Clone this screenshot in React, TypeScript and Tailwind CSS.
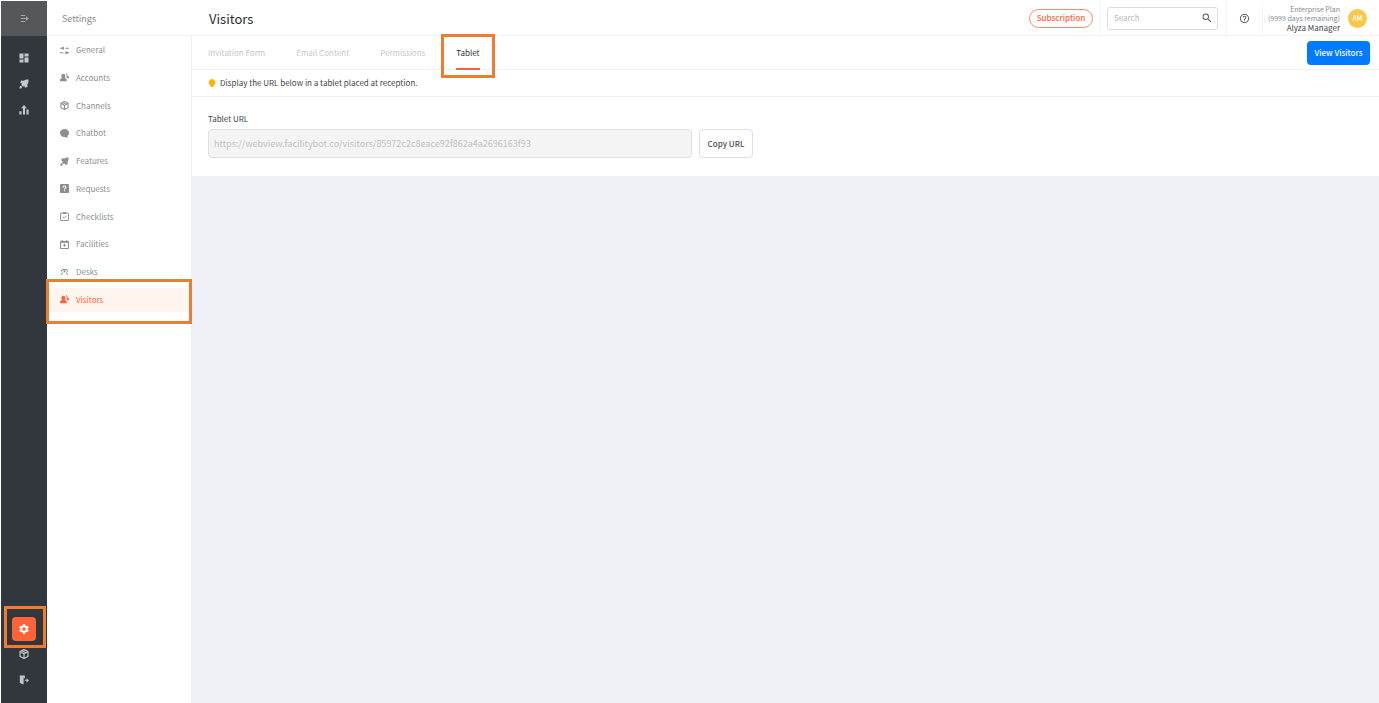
import type { ReactNode } from 'react'
import { useState } from 'react'
import clsx from 'clsx'
import { MdDashboard, MdHelpOutline, MdSearch, MdSettings } from 'react-icons/md'

interface IconProps {
  className?: string
}

function CollapseIcon({ className }: IconProps) {
  return (
    <svg viewBox="0 0 24 24" fill="none" stroke="currentColor" strokeWidth="2.8" className={className}>
      <path d="M2 4h12M2 12h15M2 20h12" />
      <path d="M16 6l7.500 6-7.500 6z" fill="currentColor" stroke="none" />
    </svg>
  )
}

function RocketIcon({ className }: IconProps) {
  return (
    <svg viewBox="0 0 24 24" fill="currentColor" className={className}>
      <path d="M23 1c-6 0-9 .8-11.500 3L5 3.500 3 9.500l4 1.500-1.500 3.500 4 4L13 17l1.500 4 6-2-.5-6.500C22.200 10 23 7 23 1z" />
      <path d="M5 16C2 16.500 1 19 1 23c4 0 6-1 6.500-4z" />
    </svg>
  )
}

function ReportIcon({ className }: IconProps) {
  return (
    <svg viewBox="0 0 24 24" fill="currentColor" className={className}>
      <path d="M1 15h5v8H1zM18 11h5v12h-5zM12 0l7 8h-4.500v15h-5V8H5z" />
    </svg>
  )
}

function BoxIcon({ className }: IconProps) {
  return (
    <svg viewBox="0 0 24 24" fill="none" stroke="currentColor" strokeWidth="2.800" strokeLinejoin="round" className={className}>
      <path d="M12 1.500l9.500 4.500v12L12 22.500 2.500 18V6z" />
      <path d="M2.500 6.500l9.500 5 9.500-5M12 11.500V22M7 4l10 5" />
    </svg>
  )
}

function LogoutIcon({ className }: IconProps) {
  return (
    <svg viewBox="0 0 24 24" fill="currentColor" className={className}>
      <path d="M2 1h12v7h-2.500V4H11v19l-9-4z" />
      <path d="M18 8l6 5-6 5v-4h-4v-2.500h4z" />
    </svg>
  )
}

function SlidersIcon({ className }: IconProps) {
  return (
    <svg viewBox="0 0 24 24" fill="none" stroke="currentColor" strokeWidth="2.800" className={className}>
      <path d="M0 6h10M14 6h10M0 18h9M15 18h9" />
      <path d="M8 2.500v7M17 14.500v7" strokeWidth="5" />
    </svg>
  )
}

function PeopleIcon({ className }: IconProps) {
  return (
    <svg viewBox="0 0 24 24" fill="currentColor" className={className}>
      <path d="M9 2c4 0 5.500 3 5.500 6 0 2.500-1 4-2 5.500 4 1 5.500 2.500 5.500 5V22H0v-3.500c0-2.500 2-4 6-5-1.500-1.500-2.500-3-2.500-5.500 0-3 1.500-6 5.500-6z" />
      <path d="M16 0c2 0 3.500.8 4 2.500L19.500 7c2.500.5 4.500 2 4.500 4.500V14h-5c-.5-1-1-1.500-1.500-2 .5-3 .5-7-1.500-12z" />
    </svg>
  )
}

function ChatIcon({ className }: IconProps) {
  return (
    <svg viewBox="0 0 24 24" fill="currentColor" className={className}>
      <path d="M12 0C5 0 0 4.500 0 10.500S5 21 11 21c3 0 5 .5 8.500 3 1-1.500 1-4 .5-6 2.500-1.500 4-4 4-7.500C24 4.500 19 0 12 0z" />
    </svg>
  )
}

function QuestionBoxIcon({ className }: IconProps) {
  return (
    <svg viewBox="0 0 24 24" className={className}>
      <rect x="0" y="0" width="24" height="24" rx="2" fill="currentColor" />
      <path d="M8.500 9c0-5 7-5 7-.5 0 3-3.500 3-3.500 6M12 16.500v3" fill="none" stroke="white" strokeWidth="3" />
    </svg>
  )
}

function ChecklistIcon({ className }: IconProps) {
  return (
    <svg viewBox="0 0 24 24" fill="none" stroke="currentColor" strokeWidth="2.600" className={className}>
      <rect x="1.500" y="3" width="21" height="19.500" rx="1" />
      <path d="M7 12.500l4 4 6.500-7" />
      <path d="M8 3h8" strokeWidth="5" />
    </svg>
  )
}

function FacilityIcon({ className }: IconProps) {
  return (
    <svg viewBox="0 0 24 24" fill="none" stroke="currentColor" strokeWidth="2.800" className={className}>
      <rect x="1.500" y="4" width="21" height="18.500" rx="1" />
      <path d="M2 5h20" strokeWidth="5" />
      <path d="M6 0v5M18 0v5M12 10v8M8 14h8" />
    </svg>
  )
}

function DeskIcon({ className }: IconProps) {
  return (
    <svg viewBox="0 0 24 24" fill="none" stroke="currentColor" strokeWidth="2.800" className={className}>
      <path d="M7 4h10l4 6M7 4l-4 5M3 18l4-6M21 18l-4-6" />
      <circle cx="12" cy="9" r="3" fill="currentColor" stroke="none" />
    </svg>
  )
}

function BulbIcon({ className }: IconProps) {
  return (
    <svg viewBox="0 0 24 24" fill="#ffb300" className={className}>
      <path d="M12 0a10 10 0 0 0-5 18.500V21c0 2 1.500 3 3 3h4c1.500 0 3-1 3-3v-2.500A10 10 0 0 0 12 0z" />
    </svg>
  )
}

const settingsItems = [
  { label: 'General', icon: SlidersIcon },
  { label: 'Accounts', icon: PeopleIcon },
  { label: 'Channels', icon: BoxIcon },
  { label: 'Chatbot', icon: ChatIcon },
  { label: 'Features', icon: RocketIcon },
  { label: 'Requests', icon: QuestionBoxIcon },
  { label: 'Checklists', icon: ChecklistIcon },
  { label: 'Facilities', icon: FacilityIcon },
  { label: 'Desks', icon: DeskIcon },
  { label: 'Visitors', icon: PeopleIcon },
]

const tabs = ['Invitation Form', 'Email Content', 'Permissions', 'Tablet']

const tabletUrl = 'https://webview.facilitybot.co/visitors/85972c2c8eace92f862a4a2696163f93'

// Orange frame drawn over the item it points at
function Highlight({ className }: IconProps) {
  return <span className={clsx('pointer-events-none absolute z-10 border-3 border-[#ed7d31]', className)} />
}

function RailButton({ label, children }: { label: string; children: ReactNode }) {
  return (
    <button aria-label={label} className="flex h-[26px] w-full items-center justify-center text-[#c5c7ca]">
      {children}
    </button>
  )
}

function Rail() {
  return (
    <aside className="flex w-[46px] shrink-0 flex-col bg-[#32363d]">
      <button aria-label="Toggle menu" className="flex h-[35px] items-center justify-center bg-[#54585b] text-[#a5a8aa]">
        <CollapseIcon className="h-[9px] w-[9px]" />
      </button>
      <nav className="flex flex-1 flex-col pt-[9px] pb-2.5">
        <RailButton label="Dashboard">
          <MdDashboard className="h-3 w-3" />
        </RailButton>
        <RailButton label="Features">
          <RocketIcon className="h-2.5 w-2.5" />
        </RailButton>
        <RailButton label="Reports">
          <ReportIcon className="h-2.5 w-2.5" />
        </RailButton>
        <div className="relative mt-auto flex justify-center">
          <button aria-label="Settings" className="flex h-6 w-6 items-center justify-center rounded bg-[#ff6337] text-white">
            <MdSettings className="h-3 w-3" />
          </button>
          <Highlight className="-top-[11px] right-px -bottom-[7px] left-[3px]" />
        </div>
        <RailButton label="Products">
          <BoxIcon className="h-2.5 w-2.5" />
        </RailButton>
        <RailButton label="Log out">
          <LogoutIcon className="h-2.5 w-2.5" />
        </RailButton>
      </nav>
    </aside>
  )
}

function Header() {
  return (
    <header className="flex h-[35px] shrink-0 items-center border-b border-[#f3f3f6]">
      <div className="w-36 shrink-0 pt-px pl-[15px] text-[9px] text-[#85898d]">Settings</div>
      <h1 className="flex-1 pt-0.5 pl-[18px] text-[13px] text-[#2b2e32]">Visitors</h1>
      <button className="h-[19px] w-16 rounded-full border border-[#ff8b6b] text-[8px] font-medium text-[#ff6337]">
        Subscription
      </button>
      <div className="ml-[7px] flex h-full w-[127px] items-center border-r-2 border-l border-[#f5f6fa] pr-[7px] pl-1.5">
        <div className="flex h-[23px] flex-1 items-center rounded-[3px] border border-[#dcdde0] pr-1 pl-1.5">
          <input
            aria-label="Search"
            placeholder="Search"
            className="w-full min-w-0 text-[8px] outline-none placeholder:text-[#b5b7ba]"
          />
          <MdSearch className="h-3 w-3 shrink-0 text-[#55595e]" />
        </div>
      </div>
      <button aria-label="Help" className="flex h-full w-9 items-center justify-center border-r border-[#f5f6fa] text-[#55595e]">
        <MdHelpOutline className="h-[11px] w-[11px]" />
      </button>
      <div className="w-[77px] text-right text-[7px] leading-[9px] whitespace-nowrap text-[#85898d]">
        <div>Enterprise Plan</div>
        <div>(9999 days remaining)</div>
        <div className="text-[8px] text-[#3f4347]">Alyza Manager</div>
      </div>
      <div className="mr-3 ml-2 flex h-[19px] w-[19px] items-center justify-center rounded-full bg-[#fac748] text-[7px] font-medium text-white">
        AM
      </div>
    </header>
  )
}

function SettingsNav() {
  return (
    <nav className="w-[145px] shrink-0 border-r border-[#eeeff2] pt-0.5">
      <ul className="flex h-[274px] flex-col justify-between px-[3px]">
        {settingsItems.map((item) => {
          const Icon = item.icon
          const active = item.label === 'Visitors'
          return (
            <li key={item.label} className="relative">
              <a
                href="#"
                className={clsx(
                  'flex h-6 items-center gap-[7px] pl-2.5 text-[8px]',
                  active ? 'bg-[#fff5ef] text-[#ff6337]' : 'text-[#8b8f93]'
                )}
              >
                <Icon className="h-[9px] w-[9px]" />
                {item.label}
              </a>
              {active && <Highlight className="-inset-x-1 -top-[9px] -bottom-3" />}
            </li>
          )
        })}
      </ul>
    </nav>
  )
}

function TabBar() {
  const [active, setActive] = useState('Tablet')

  return (
    <div className="flex h-[34px] items-center border-b border-[#f0f1f4] pr-[9px] pl-4">
      <div role="tablist" className="flex h-[34px] flex-1 gap-[31px]">
        {tabs.map((tab) => (
          <button
            key={tab}
            role="tab"
            aria-selected={active === tab}
            onClick={() => setActive(tab)}
            className={clsx(
              'relative h-full border-b-2 pt-0.5 text-[8px]',
              active === tab ? 'border-[#f26440] text-[#2b2e32]' : 'border-transparent text-[#c5c7ca]'
            )}
          >
            {tab}
            {tab === 'Tablet' && <Highlight className="-inset-x-[15px] -top-0.5 -bottom-2.5" />}
          </button>
        ))}
      </div>
      <button className="h-6 w-[63px] rounded bg-[#007bff] text-[8px] font-medium text-white">View Visitors</button>
    </div>
  )
}

export default function App() {
  return (
    <div className="flex h-screen bg-white pt-px pl-px font-['Noto_Sans_CJK_SC',sans-serif]">
      <Rail />
      <div className="flex min-w-0 flex-1 flex-col">
        <Header />
        <div className="flex min-h-0 flex-1">
          <SettingsNav />
          <main className="min-w-0 flex-1 bg-[#eff1f6]">
            <div className="bg-white">
              <TabBar />
              <div className="flex h-[27px] items-center gap-1 border-b border-[#eef1f5] pl-4 text-[8px] text-[#3f4347]">
                <BulbIcon className="h-2 w-2" />
                Display the URL below in a tablet placed at reception.
              </div>
              <div className="px-4 pt-4 pb-[18px]">
                <label htmlFor="tablet-url" className="block text-[8px] leading-3 text-[#3f4347]">
                  Tablet URL
                </label>
                <div className="mt-1 flex gap-[7px]">
                  <input
                    id="tablet-url"
                    disabled
                    value={tabletUrl}
                    className="h-[29px] w-[484px] rounded border border-[#dfe0e2] bg-[#f4f4f4] px-[5px] text-[9px] text-[#bfc1c3]"
                  />
                  <button className="h-[29px] w-[54px] rounded border border-[#dfe0e2] text-[8px] font-medium text-[#4a4e53]">
                    Copy URL
                  </button>
                </div>
              </div>
            </div>
          </main>
        </div>
      </div>
    </div>
  )
}
